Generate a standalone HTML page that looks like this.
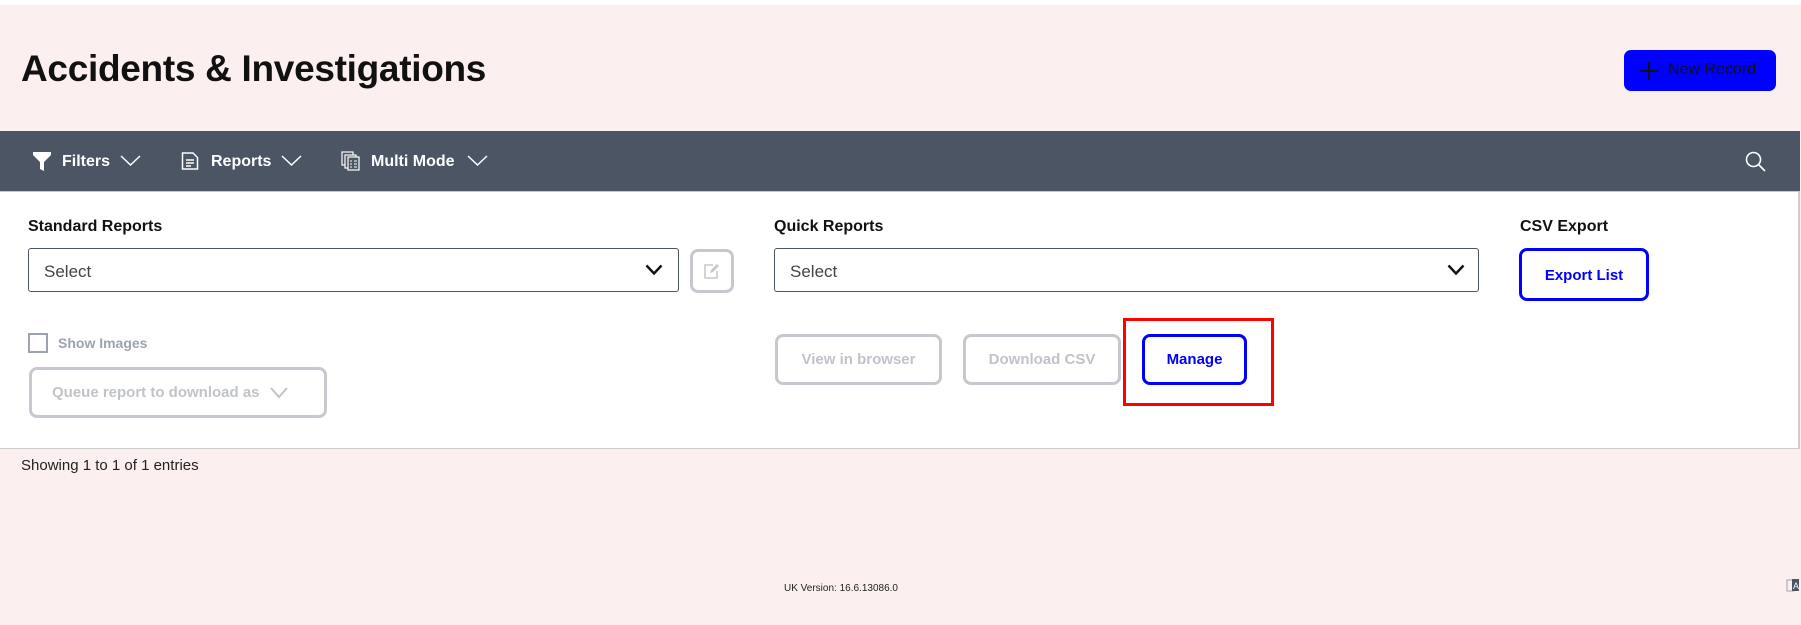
<!DOCTYPE html>
<html><head><meta charset="utf-8"><style>
*{box-sizing:border-box;margin:0;padding:0}
body{width:1801px;height:625px;background:#fbf0ef;font-family:"Liberation Sans",sans-serif;position:relative;overflow:hidden;color:#111}
.abs{position:absolute}
.top{left:0;top:0;width:1801px;height:5px;background:#fff}
h1{position:absolute;left:21px;top:48px;font-size:37px;font-weight:bold;color:#111;letter-spacing:-0.3px}
.newrec{left:1624px;top:50px;width:152px;height:41px;background:#0000ff;border-radius:7px;color:#111;font-size:16px}
.nav{left:0;top:131px;width:1800px;height:61px;background:#4b5563;border-bottom:1px solid #c8c8c8}
.nav span{position:absolute;color:#fff;font-weight:bold;font-size:16px;top:22px}
.panel{left:0;top:192px;width:1800px;height:257px;background:#fff;border-right:2px solid #ccc;border-bottom:1px solid #ccc}
.lbl{font-size:16px;font-weight:bold;color:#111}
.sel{height:44px;border:1px solid #4b5563;border-radius:3px;font-size:17px;color:#444;padding:13px 0 0 15px}
.btn{border:3px solid #c5c8ce;border-radius:8px;color:#c0c3c9;font-weight:bold;font-size:15px;text-align:center}
.blue{border-color:#0000ff;color:#0000ff}
</style></head><body>
<div class="abs top"></div>
<h1>Accidents &amp; Investigations</h1>
<div class="abs newrec">
<svg class="abs" style="left:15px;top:11px" width="20" height="20"><path d="M10 1V19M1 10H19" stroke="#111" stroke-width="2"/></svg>
<span class="abs" style="left:44px;top:11px">New Record</span></div>
<div class="abs nav">
<svg class="abs" style="left:33px;top:21px" width="18" height="19"><path d="M0 0H18V3L11 10V19L7 17V10L0 3Z" fill="#fff"/></svg>
<span style="left:62px">Filters</span>
<svg class="abs" style="left:120px;top:24px" width="21" height="12"><path d="M1 1L10.5 10L20 1" stroke="#fff" stroke-width="1.5" fill="none"/></svg>
<svg class="abs" style="left:181px;top:21px" width="18" height="18"><path d="M1.5 1H12L16.5 5.5V17H1.5Z" stroke="#fff" stroke-width="1.5" fill="none"/><path d="M5 8H13M5 11H13M5 14H10" stroke="#fff" stroke-width="1.4"/></svg>
<span style="left:211px">Reports</span>
<svg class="abs" style="left:281px;top:24px" width="21" height="12"><path d="M1 1L10.5 10L20 1" stroke="#fff" stroke-width="1.5" fill="none"/></svg>
<svg class="abs" style="left:341px;top:20px" width="20" height="20"><rect x="1" y="1" width="11" height="13" stroke="#fff" fill="none" stroke-width="1.2"/><rect x="4" y="4" width="11" height="13" stroke="#fff" fill="#4b5563" stroke-width="1.2"/><rect x="7" y="6" width="11" height="13" stroke="#fff" fill="#4b5563" stroke-width="1.2"/><path d="M9 10H11M13 10H16M9 13H11M13 13H16M9 16H11M13 16H16" stroke="#fff" stroke-width="1.1"/></svg>
<span style="left:371px">Multi Mode</span>
<svg class="abs" style="left:467px;top:24px" width="21" height="12"><path d="M1 1L10.5 10L20 1" stroke="#fff" stroke-width="1.5" fill="none"/></svg>
<svg class="abs" style="left:1745px;top:20px" width="21" height="21"><circle cx="8.5" cy="8.5" r="7" stroke="#fff" stroke-width="1.6" fill="none"/><path d="M13.5 13.5L20 20" stroke="#fff" stroke-width="1.6"/></svg>
</div>
<div class="abs panel"></div>
<div class="abs lbl" style="left:28px;top:218px">Standard Reports</div>
<div class="abs sel" style="left:28px;top:248px;width:651px">Select</div>
<svg class="abs" style="left:645px;top:264px" width="18" height="12"><path d="M1.5 1.5L9 9.5L16.5 1.5" stroke="#111" stroke-width="2.4" fill="none"/></svg>
<div class="abs btn" style="left:690px;top:249px;width:44px;height:44px"><svg style="margin-top:10px" width="18" height="18"><path d="M10 3H2V16H14V9" stroke="#c5c8ce" stroke-width="1.6" fill="none"/><path d="M7 11L8 8L14 2L16 4L10 10Z" fill="#c5c8ce"/></svg></div>
<div class="abs" style="left:28px;top:333px;width:20px;height:20px;border:2px solid #9ca3af"></div>
<div class="abs" style="left:58px;top:335px;font-size:14px;font-weight:bold;color:#9ca3af">Show Images</div>
<div class="abs btn" style="left:29px;top:367px;width:298px;height:51px;padding-top:14px;text-align:left;padding-left:20px">Queue report to download as <svg style="margin-left:6px;vertical-align:-2px" width="18" height="12"><path d="M1 1L9 10L17 1" stroke="#c0c3c9" stroke-width="2" fill="none"/></svg></div>
<div class="abs lbl" style="left:774px;top:218px">Quick Reports</div>
<div class="abs sel" style="left:774px;top:248px;width:705px">Select</div>
<svg class="abs" style="left:1447px;top:264px" width="18" height="12"><path d="M1.5 1.5L9 9.5L16.5 1.5" stroke="#111" stroke-width="2.4" fill="none"/></svg>
<div class="abs btn" style="left:775px;top:334px;width:167px;height:51px;padding-top:14px">View in browser</div>
<div class="abs btn" style="left:963px;top:334px;width:158px;height:51px;padding-top:14px">Download CSV</div>
<div class="abs btn blue" style="left:1142px;top:334px;width:105px;height:51px;padding-top:14px">Manage</div>
<div class="abs" style="left:1123px;top:318px;width:151px;height:88px;border:3px solid #ff0000"></div>
<div class="abs lbl" style="left:1520px;top:218px">CSV Export</div>
<div class="abs btn blue" style="left:1519px;top:248px;width:130px;height:53px;padding-top:16px">Export List</div>
<div class="abs" style="left:21px;top:457px;font-size:15px;color:#222">Showing 1 to 1 of 1 entries</div>
<div class="abs" style="left:784px;top:583px;font-size:10px;color:#222">UK Version: 16.6.13086.0</div>
<svg class="abs" style="left:1786px;top:578px" width="14" height="16"><rect x="1" y="2" width="7" height="11" fill="none" stroke="#9ca3af"/><rect x="6" y="1" width="7" height="12" fill="#4b5563"/><text x="7" y="11" font-size="9" fill="#fff" font-family="Liberation Sans">A</text></svg>
</body></html>
